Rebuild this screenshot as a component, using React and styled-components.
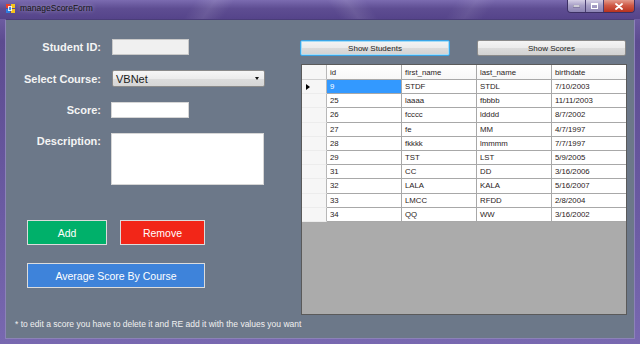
import React from "react";
import styled, { createGlobalStyle } from "styled-components";

const GlobalStyle = createGlobalStyle`
  html, body {
    margin: 0;
    padding: 0;
    background: #5d4c90;
    overflow: hidden;
  }
  * { box-sizing: border-box; }
`;

const Window = styled.div`
  width: 640px;
  height: 344px;
  display: flex;
  flex-direction: column;
  padding: 0 5px 5px 5px;
  background: linear-gradient(180deg, #7a6aae 0%, #5c4b90 12%, #6a5aa2 60%, #7868b0 100%);
  font-family: "Liberation Sans", Arial, sans-serif;
`;

const TitleBar = styled.div`
  height: 19px;
  display: flex;
  align-items: flex-start;
  margin: 0 -5px;
  padding: 0 5px 0 6px;
  background:
    linear-gradient(125deg, transparent 30%, rgba(255,255,255,0.10) 33%, transparent 36%),
    linear-gradient(55deg, transparent 52%, rgba(255,255,255,0.10) 55%, transparent 58%),
    linear-gradient(125deg, transparent 70%, rgba(255,255,255,0.08) 73%, transparent 76%),
    linear-gradient(180deg, #7b6bb0 0%, #5e4d92 45%, #55448a 100%);
`;

const AppIcon = styled.svg`
  margin-top: 4px;
  flex: none;
`;

const Title = styled.div`
  margin: 3px 0 0 5px;
  font-family: "Liberation Sans", Arial, sans-serif;
  font-size: 8.5px;
  color: #151515;
  text-shadow: 0 0 4px rgba(255,255,255,0.55);
  flex: 1;
`;

const Controls = styled.div`
  display: flex;
  height: 13px;
  border: 1px solid #3c3064;
  border-top: none;
  border-radius: 0 0 4px 4px;
  overflow: hidden;
`;

const CtrlButton = styled.div`
  width: ${(p) => p.$w}px;
  height: 100%;
  display: flex;
  align-items: center;
  justify-content: center;
  border-left: ${(p) => (p.$first ? "none" : "1px solid #4a3f72")};
  background: ${(p) =>
    p.$close
      ? "linear-gradient(180deg, #e39a8c 0%, #cf5a47 45%, #b8321f 100%)"
      : "linear-gradient(180deg, #d6d0e6 0%, #a79fc6 45%, #8c83b3 100%)"};
`;

const Client = styled.div`
  flex: 1;
  display: flex;
  background: #6c7889;
  border: 1px solid #8c82b8;
  border-top-color: #4a3d78;
`;

const LeftPanel = styled.div`
  width: 294px;
  padding: 19px 0 0 9px;
  display: flex;
  flex-direction: column;
`;

const FormGrid = styled.div`
  display: grid;
  grid-template-columns: 86px auto;
  grid-template-rows: 16px 17px 16px 52px;
  column-gap: 10px;
  row-gap: 15px;
`;

const Label = styled.div`
  font-family: "Liberation Sans", Arial, sans-serif;
  font-weight: bold;
  font-size: 11px;
  color: #f4f4f4;
  text-align: right;
  white-space: nowrap;
  align-self: ${(p) => (p.$top ? "start" : "center")};
  padding-top: ${(p) => (p.$top ? "2px" : "0")};
`;

const TextInput = styled.div`
  width: ${(p) => p.$w}px;
  height: 100%;
  margin-left: ${(p) => p.$shift || 0}px;
  background: ${(p) => (p.$disabled ? "#f0f0f0" : "#ffffff")};
  border: 1px solid ${(p) => (p.$disabled ? "#c9c9c9" : "#d6d6d6")};
`;

const Select = styled.div`
  width: 153px;
  height: 100%;
  margin-left: 1px;
  display: flex;
  align-items: center;
  justify-content: space-between;
  padding: 0 5px 0 3px;
  border: 1px solid #8a8a8a;
  border-radius: 2px;
  background: linear-gradient(180deg, #f6f6f6 0%, #ececec 50%, #dddddd 51%, #d6d6d6 100%);
  font-family: "Liberation Sans", Arial, sans-serif;
  font-size: 11px;
  color: #1c1c1c;
`;

const Caret = styled.span`
  width: 0;
  height: 0;
  border-left: 2.5px solid transparent;
  border-right: 2.5px solid transparent;
  border-top: 3px solid #111;
`;

const ButtonArea = styled.div`
  margin: 35px 0 0 12px;
  display: flex;
  flex-direction: column;
  gap: 18px;
`;

const ButtonRow = styled.div`
  display: flex;
  gap: 13px;
`;

const ColorButton = styled.div`
  width: ${(p) => p.$w}px;
  height: 25px;
  display: flex;
  align-items: center;
  justify-content: center;
  background: ${(p) => p.$bg};
  border: 1px solid #dcdcdc;
  color: #ffffff;
  font-family: "Liberation Sans", Arial, sans-serif;
  font-size: 10.5px;
`;

const Footnote = styled.div`
  margin-top: 31px;
  font-family: "Liberation Sans", Arial, sans-serif;
  font-size: 8.5px;
  color: #f0f0f0;
  white-space: nowrap;
`;

const RightPanel = styled.div`
  padding-top: 20px;
  display: flex;
  flex-direction: column;
`;

const TopButtons = styled.div`
  display: flex;
  gap: 27px;
`;

const GrayButton = styled.div`
  width: ${(p) => p.$w}px;
  height: 16px;
  display: flex;
  align-items: center;
  justify-content: center;
  border: 1px solid ${(p) => (p.$focus ? "#3aa6e8" : "#8a8a8a")};
  box-shadow: ${(p) => (p.$focus ? "inset 0 0 0 1px #a6dcf6" : "none")};
  border-radius: 2px;
  background: linear-gradient(180deg, #f4f4f4 0%, #ebebeb 50%, #dcdcdc 51%, #d2d2d2 100%);
  font-family: "Liberation Sans", Arial, sans-serif;
  font-size: 8px;
  color: #1e1e1e;
`;

const Grid = styled.div`
  margin: 8px 0 0 1px;
  width: 326px;
  height: 251px;
  border: 1px solid #5a5a5a;
  background: #ababab;
  overflow: hidden;
`;

const GridRow = styled.div`
  display: grid;
  grid-template-columns: 25px 75px 75px 75px 74px;
  height: ${(p) => (p.$header ? 15 : 14.2)}px;
  background: #ffffff;
`;

const Cell = styled.div`
  display: flex;
  align-items: center;
  padding-left: 3px;
  border-right: 1px solid #a8a8a8;
  border-bottom: 1px solid #a8a8a8;
  font-family: "Liberation Sans", Arial, sans-serif;
  font-size: 7.8px;
  color: ${(p) => (p.$selected ? "#ffffff" : "#2a2222")};
  background: ${(p) =>
    p.$selected
      ? "#3399ff"
      : p.$header
      ? "linear-gradient(180deg, #ffffff 0%, #f7f7f7 100%)"
      : "#ffffff"};
  white-space: nowrap;
  overflow: hidden;
  &:last-child {
    border-right: none;
  }
`;

const RowHead = styled.div`
  display: flex;
  align-items: center;
  padding-left: 4px;
  background: #f6f6f6;
  border-right: 1px solid #b8b8b8;
  border-bottom: 1px solid ${(p) => (p.$header ? "#d0d0d0" : "#ececec")};
`;

const students = [
  ["9", "STDF", "STDL", "7/10/2003"],
  ["25", "laaaa", "fbbbb", "11/11/2003"],
  ["26", "fcccc", "ldddd", "8/7/2002"],
  ["27", "fe", "MM", "4/7/1997"],
  ["28", "fkkkk", "lmmmm", "7/7/1997"],
  ["29", "TST", "LST", "5/9/2005"],
  ["31", "CC", "DD", "3/16/2006"],
  ["32", "LALA", "KALA", "5/16/2007"],
  ["33", "LMCC", "RFDD", "2/8/2004"],
  ["34", "QQ", "WW", "3/16/2002"],
];

const columns = ["id", "first_name", "last_name", "birthdate"];

const App = () => {
  return (
    <>
      <GlobalStyle />
      <Window>
        <TitleBar>
          <AppIcon width="9" height="9" viewBox="0 0 9 9">
            <rect x="0" y="0" width="4" height="4" fill="#e8402a" />
            <rect x="5" y="0" width="4" height="4" fill="#f5c21b" />
            <rect x="0" y="5" width="4" height="4" fill="#2f7de0" />
            <rect x="5" y="5" width="4" height="4" fill="#f5c21b" />
            <rect x="2" y="2" width="4" height="5" fill="#ffffff" opacity="0.85" />
            <rect x="3" y="3" width="2" height="3" fill="#3f8ee6" />
          </AppIcon>
          <Title>manageScoreForm</Title>
          <Controls>
            <CtrlButton $w={17} $first>
              <svg width="7" height="3" viewBox="0 0 7 3">
                <rect x="0" y="0" width="7" height="2" fill="#ffffff" stroke="#3a3358" strokeWidth="0.5" />
              </svg>
            </CtrlButton>
            <CtrlButton $w={18}>
              <svg width="7" height="6" viewBox="0 0 7 6">
                <rect x="0.5" y="0.5" width="6" height="5" fill="none" stroke="#ffffff" strokeWidth="1" />
                <rect x="0.5" y="0.5" width="6" height="1.5" fill="#ffffff" />
              </svg>
            </CtrlButton>
            <CtrlButton $w={31} $close>
              <svg width="8" height="7" viewBox="0 0 8 7">
                <path d="M1 1 L7 6 M7 1 L1 6" stroke="#ffffff" strokeWidth="1.8" strokeLinecap="round" />
              </svg>
            </CtrlButton>
          </Controls>
        </TitleBar>
        <Client>
          <LeftPanel>
            <FormGrid>
              <Label>Student ID:</Label>
              <TextInput $w={77} $shift={1} $disabled />
              <Label>Select Course:</Label>
              <Select>
                <span>VBNet</span>
                <Caret />
              </Select>
              <Label>Score:</Label>
              <TextInput $w={78} />
              <Label $top>Description:</Label>
              <TextInput $w={153} />
            </FormGrid>
            <ButtonArea>
              <ButtonRow>
                <ColorButton $w={80} $bg="#00b06a">Add</ColorButton>
                <ColorButton $w={85} $bg="#f22618">Remove</ColorButton>
              </ButtonRow>
              <ColorButton $w={178} $bg="#3e83da">Average Score By Course</ColorButton>
            </ButtonArea>
            <Footnote>* to edit a score you have to delete it and RE add it with the values you want</Footnote>
          </LeftPanel>
          <RightPanel>
            <TopButtons>
              <GrayButton $w={150} $focus>Show Students</GrayButton>
              <GrayButton $w={149}>Show Scores</GrayButton>
            </TopButtons>
            <Grid>
              <GridRow $header>
                <RowHead $header />
                {columns.map((c) => (
                  <Cell key={c} $header>{c}</Cell>
                ))}
              </GridRow>
              {students.map((row, i) => (
                <GridRow key={row[0]}>
                  <RowHead>
                    {i === 0 && (
                      <svg width="4" height="6" viewBox="0 0 4 6">
                        <polygon points="0,0 4,3 0,6" fill="#000000" />
                      </svg>
                    )}
                  </RowHead>
                  {row.map((v, j) => (
                    <Cell key={j} $selected={i === 0 && j === 0}>{v}</Cell>
                  ))}
                </GridRow>
              ))}
            </Grid>
          </RightPanel>
        </Client>
      </Window>
    </>
  );
};

export default App;
